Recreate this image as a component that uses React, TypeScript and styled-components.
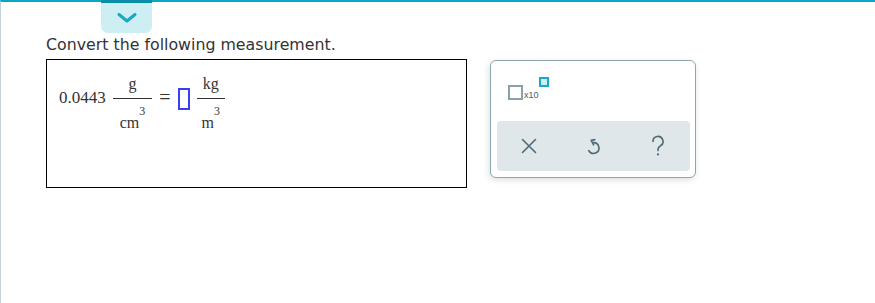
import React from "react";
import styled, { createGlobalStyle } from "styled-components";

const Global = createGlobalStyle`
  html, body { margin: 0; padding: 0; background: #ffffff; }
  body { font-family: "DejaVu Sans", Verdana, sans-serif; }
`;

const Page = styled.div`
  box-sizing: border-box;
  height: 303px;
  border-top: 2px solid #0aa6c8;
  border-left: 1px solid #c4d2db;
  display: flex;
  flex-direction: column;
`;

const Tab = styled.div`
  box-sizing: border-box;
  margin: -2px 0 0 100px;
  width: 51px;
  height: 33px;
  background: #cdeef3;
  border-top: 3px solid #0b8ea8;
  border-radius: 0 0 7px 7px;
  display: flex;
  align-items: center;
  justify-content: center;
`;

const Content = styled.div`
  padding-left: 45px;
`;

const Heading = styled.div`
  margin-top: 2px;
  font-size: 15.8px;
  line-height: 19px;
  color: #333333;
`;

const Row = styled.div`
  margin-top: 5px;
  display: flex;
  align-items: flex-start;
  gap: 23px;
`;

const AnswerBox = styled.div`
  box-sizing: border-box;
  width: 421px;
  height: 129px;
  border: 1px solid #000000;
`;

const MathRow = styled.div`
  display: flex;
  align-items: flex-start;
  gap: 7px;
  padding-left: 12px;
  font-family: "Liberation Serif", "Times New Roman", serif;
  color: #333333;
`;

const Plain = styled.span<{ $top: number }>`
  margin-top: ${(p) => p.$top}px;
  font-size: 17px;
  line-height: 20px;
`;

const Equals = styled.span<{ $top: number }>`
  margin-top: ${(p) => p.$top}px;
  font-size: 20px;
  line-height: 20px;
`;

const Frac = styled.span<{ $top: number; $pad: number }>`
  margin-top: ${(p) => p.$top}px;
  display: inline-flex;
  flex-direction: column;
  align-items: center;
  padding: 0 ${(p) => p.$pad}px;
`;

const Num = styled.span`
  font-size: 16px;
  line-height: 16px;
`;

const Bar = styled.span<{ $pad: number }>`
  align-self: stretch;
  height: 1px;
  margin: 6px -${(p) => p.$pad}px 0;
  background: #333333;
`;

const Den = styled.span`
  display: flex;
  align-items: flex-start;
`;

const Unit = styled.span`
  margin-top: 16px;
  font-size: 16px;
  line-height: 16px;
`;

const Sup = styled.span`
  margin-top: 7px;
  font-size: 12px;
  line-height: 11px;
`;

const Blank = styled.span<{ $top: number }>`
  box-sizing: border-box;
  margin-top: ${(p) => p.$top}px;
  width: 12px;
  height: 22px;
  border: 2px solid #3d3df2;
`;

const Panel = styled.div`
  box-sizing: border-box;
  margin-top: 1px;
  width: 206px;
  height: 118px;
  border: 1px solid #8fa5ae;
  border-radius: 6px;
  background: #ffffff;
  box-shadow: -1px 2px 6px rgba(60, 80, 90, 0.18);
  padding: 0 5px 6px 6px;
  display: flex;
  flex-direction: column;
`;

const Palette = styled.div`
  flex: 1;
  padding: 16px 0 0 11px;
`;

const TenPower = styled.div`
  display: flex;
  align-items: flex-end;
  height: 23px;
`;

const BaseSquare = styled.span`
  box-sizing: border-box;
  width: 15px;
  height: 15px;
  border: 2px solid #8ba1a9;
`;

const TimesTen = styled.span`
  font-family: "Liberation Sans", Arial, sans-serif;
  font-size: 9px;
  line-height: 9px;
  color: #4a5d66;
  margin-left: 1px;
`;

const ExpSquare = styled.span`
  box-sizing: border-box;
  align-self: flex-start;
  width: 10px;
  height: 10px;
  background: #c9eef4;
  border: 2px solid #1fa8c6;
`;

const Toolbar = styled.div`
  height: 50px;
  background: #dfe7ea;
  border-radius: 4px;
  display: grid;
  grid-template-columns: repeat(3, 1fr);
  align-items: center;
  justify-items: center;
`;

const ToolButton = styled.span`
  display: flex;
  align-items: center;
  justify-content: center;
  width: 24px;
  height: 24px;
  color: #4d6a76;
`;

const Chevron = () => (
  <svg width="20" height="10" viewBox="0 0 20 10">
    <path d="M2 1.5 L10 8 L18 1.5" fill="none" stroke="#19a7c6" strokeWidth="3" strokeLinecap="round" strokeLinejoin="round" />
  </svg>
);

const CloseIcon = () => (
  <svg width="16" height="16" viewBox="0 0 16 16">
    <path d="M1.5 1.5 L14.5 14.5 M14.5 1.5 L1.5 14.5" stroke="currentColor" strokeWidth="1.6" strokeLinecap="round" />
  </svg>
);

const UndoIcon = () => (
  <svg width="16" height="18" viewBox="0 0 16 18">
    <path d="M3.8 13.6 A5.4 5.4 0 1 0 8.2 5.6" fill="none" stroke="currentColor" strokeWidth="1.6" strokeLinecap="round" />
    <path d="M9.8 2.6 L6.2 3.4 L8.6 7.8" fill="none" stroke="currentColor" strokeWidth="1.6" strokeLinecap="round" strokeLinejoin="round" />
  </svg>
);

const HelpIcon = () => (
  <svg width="16" height="22" viewBox="0 0 16 22">
    <path d="M3 6.5 A5 5 0 1 1 10.5 10.8 C8.8 11.8 8 12.8 8 14.6 L8 15.6" fill="none" stroke="currentColor" strokeWidth="1.6" strokeLinecap="round" />
    <circle cx="8" cy="19.4" r="1.1" fill="currentColor" />
  </svg>
);

type UnitFracProps = { top: string; unit: string; pad: number };

const UnitFrac = ({ top, unit, pad }: UnitFracProps) => (
  <Frac $top={16} $pad={pad}>
    <Num>{top}</Num>
    <Bar $pad={pad} />
    <Den>
      <Unit>{unit}</Unit>
      <Sup>3</Sup>
    </Den>
  </Frac>
);

export default function App() {
  return (
    <>
      <Global />
      <Page>
        <Tab>
          <Chevron />
        </Tab>
        <Content>
          <Heading>Convert the following measurement.</Heading>
          <Row>
            <AnswerBox>
              <MathRow>
                <Plain $top={28}>0.0443</Plain>
                <UnitFrac top="g" unit="cm" pad={7} />
                <Equals $top={27}>=</Equals>
                <Blank $top={28} />
                <UnitFrac top="kg" unit="m" pad={5} />
              </MathRow>
            </AnswerBox>
            <Panel>
              <Palette>
                <TenPower>
                  <BaseSquare />
                  <TimesTen>x10</TimesTen>
                  <ExpSquare />
                </TenPower>
              </Palette>
              <Toolbar>
                <ToolButton>
                  <CloseIcon />
                </ToolButton>
                <ToolButton>
                  <UndoIcon />
                </ToolButton>
                <ToolButton>
                  <HelpIcon />
                </ToolButton>
              </Toolbar>
            </Panel>
          </Row>
        </Content>
      </Page>
    </>
  );
}
